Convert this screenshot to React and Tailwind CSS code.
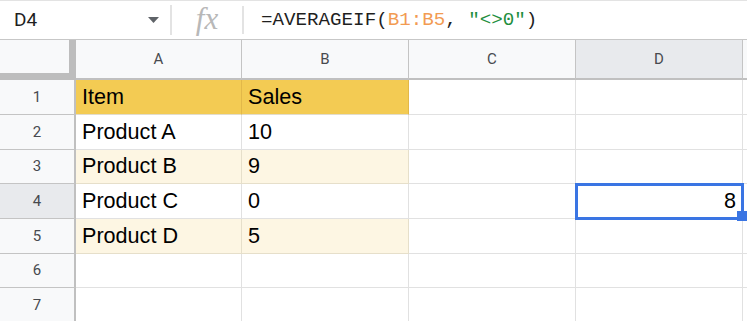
import React from 'react'

const rows = [
  { n: 1, a: 'Item', b: 'Sales', tone: 'head', h: 'h-[35px]' },
  { n: 2, a: 'Product A', b: '10', tone: 'plain', h: 'h-[35px]' },
  { n: 3, a: 'Product B', b: '9', tone: 'band', h: 'h-[34px]' },
  { n: 4, a: 'Product C', b: '0', tone: 'plain', h: 'h-[35px]', d: '8', selected: true },
  { n: 5, a: 'Product D', b: '5', tone: 'band', h: 'h-[35px]' },
  { n: 6, a: '', b: '', tone: 'plain', h: 'h-[34px]' },
  { n: 7, a: '', b: '', tone: 'plain', h: 'h-[35px]' },
]

const tones = {
  head: 'bg-[#f3cb53] border-r-[#e2b849] border-b-[#e2dccb]',
  band: 'bg-[#fdf6e3] border-r-[#e6dfca] border-b-[#e6dfca]',
  plain: 'bg-white border-r-[#e1e1e1] border-b-[#e1e1e1]',
}

const cellBase = 'flex items-center px-[6px] border-r border-b text-[21.6px] text-black whitespace-nowrap overflow-hidden'
const plainCell = 'bg-white border-r-[#e1e1e1] border-b-[#e1e1e1]'
const arial = { fontFamily: '"Liberation Sans", Arial, sans-serif' }

function ColHeader({ label, width, active }) {
  return (
    <div
      className={`${width} flex items-center justify-center border-r border-r-[#c4c4c4] border-b-2 border-b-[#c0c0c0] text-[15px] text-[#474a4f] ${active ? 'bg-[#e8eaed]' : 'bg-[#f8f9fa]'}`}
    >
      {label}
    </div>
  )
}

export default function App() {
  return (
    <div className="relative w-[747px] h-[321px] overflow-hidden bg-white" style={{ fontFamily: 'Roboto, "Liberation Sans", sans-serif' }}>

      {/* Formula bar */}
      <div className="flex h-[40px] items-center border-t border-t-[#e3e3e3] border-b border-b-[#c7c7c7] bg-white">
        <div className="flex w-[170px] items-center justify-between pl-[14px] pr-[11px]">
          <span className="text-[19px] text-[#1f1f1f]">D4</span>
          <svg width="11" height="6" viewBox="0 0 11 6"><path d="M0 0h11L5.5 6z" fill="#5f6368" /></svg>
        </div>
        <div className="h-[30px] w-[2px] bg-[#e3e3e3]" />
        <div className="flex w-[70px] items-center justify-center">
          <span className="italic text-[31px] leading-none text-[#b8b8b8] pb-[3px]" style={{ fontFamily: '"Liberation Serif", serif' }}>fx</span>
        </div>
        <div className="h-[28px] w-[2px] bg-[#e3e3e3]" />
        <div className="pl-[17px] text-[19.2px] text-[#1f1f1f]" style={{ fontFamily: '"Liberation Mono", monospace' }}>
          =AVERAGEIF(<span className="text-[#f29b52]">B1:B5</span>, <span className="text-[#1e8e3e]">"&lt;&gt;0"</span>)
        </div>
      </div>

      {/* Column headers */}
      <div className="flex h-[40px]">
        <div className="w-[76px] bg-[#bdbdbd]">
          <div className="w-[69px] h-[33px] bg-[#f8f9fa]" />
        </div>
        <ColHeader label="A" width="w-[166px]" />
        <ColHeader label="B" width="w-[167px]" />
        <ColHeader label="C" width="w-[167px]" />
        <ColHeader label="D" width="w-[167px]" active />
        <div className="flex-1 bg-[#f8f9fa] border-b-2 border-b-[#c0c0c0]" />
      </div>

      {/* Rows */}
      {rows.map((r) => (
        <div key={r.n} className={`flex ${r.h}`}>
          <div
            className={`w-[76px] flex items-center justify-center border-r-2 border-r-[#c0c0c0] border-b border-b-[#c4c4c4] text-[15px] text-[#474a4f] ${r.selected ? 'bg-[#e8eaed]' : 'bg-[#f8f9fa]'}`}
          >
            {r.n}
          </div>
          <div className={`w-[166px] ${cellBase} ${tones[r.tone]}`} style={arial}>{r.a}</div>
          <div className={`w-[167px] ${cellBase} ${tones[r.tone]}`} style={arial}>{r.b}</div>
          <div className={`w-[167px] ${cellBase} ${plainCell}`} />
          <div className={`w-[167px] ${cellBase} ${plainCell} justify-end`} style={arial}>{r.d}</div>
          <div className="flex-1 bg-white border-b border-b-[#e1e1e1]" />
        </div>
      ))}

      {/* Selection on D4 */}
      <div className="absolute left-[575px] top-[183px] w-[169px] h-[37px] border-[3px] border-[#3a75e3] pointer-events-none" />
      <div className="absolute left-[737px] top-[211px] w-[10px] h-[10px] bg-[#3a75e3]" />
    </div>
  )
}
